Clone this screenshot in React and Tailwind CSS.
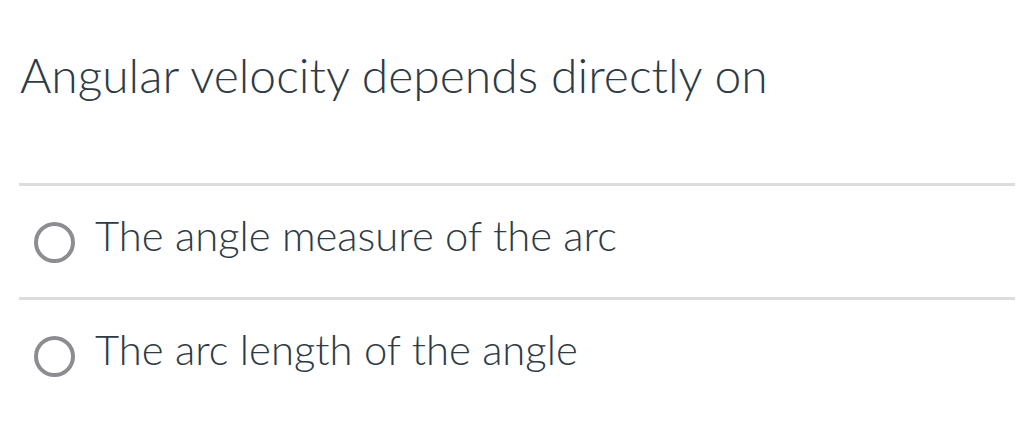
export default function App() {
  const options = ["The angle measure of the arc", "The arc length of the angle"];
  return (
    <div className="w-[1025px] h-[446px] bg-white overflow-hidden" style={{ fontFamily: "Lato, 'Noto Sans', sans-serif" }}>
      <div className="pl-[20px] pt-[46px] text-[48px] leading-[1.2] font-light text-[#2d3b45]">
        Angular velocity depends directly on
      </div>

      <div className="ml-[19px] mr-[10px] mt-[79px]">
        {options.map((opt) => (
          <div key={opt} className="border-t-[3px] border-[#dcdcdc] h-[114px] flex items-start">
            <span className="mt-[36px] ml-[15px] w-[41px] h-[41px] shrink-0 rounded-full border-[4px] border-[#8d8d91]" />
            <span className="mt-[24px] ml-[20px] text-[41.8px] leading-[1.2] font-light text-[#2d3b45]">{opt}</span>
          </div>
        ))}
      </div>
    </div>
  );
}
